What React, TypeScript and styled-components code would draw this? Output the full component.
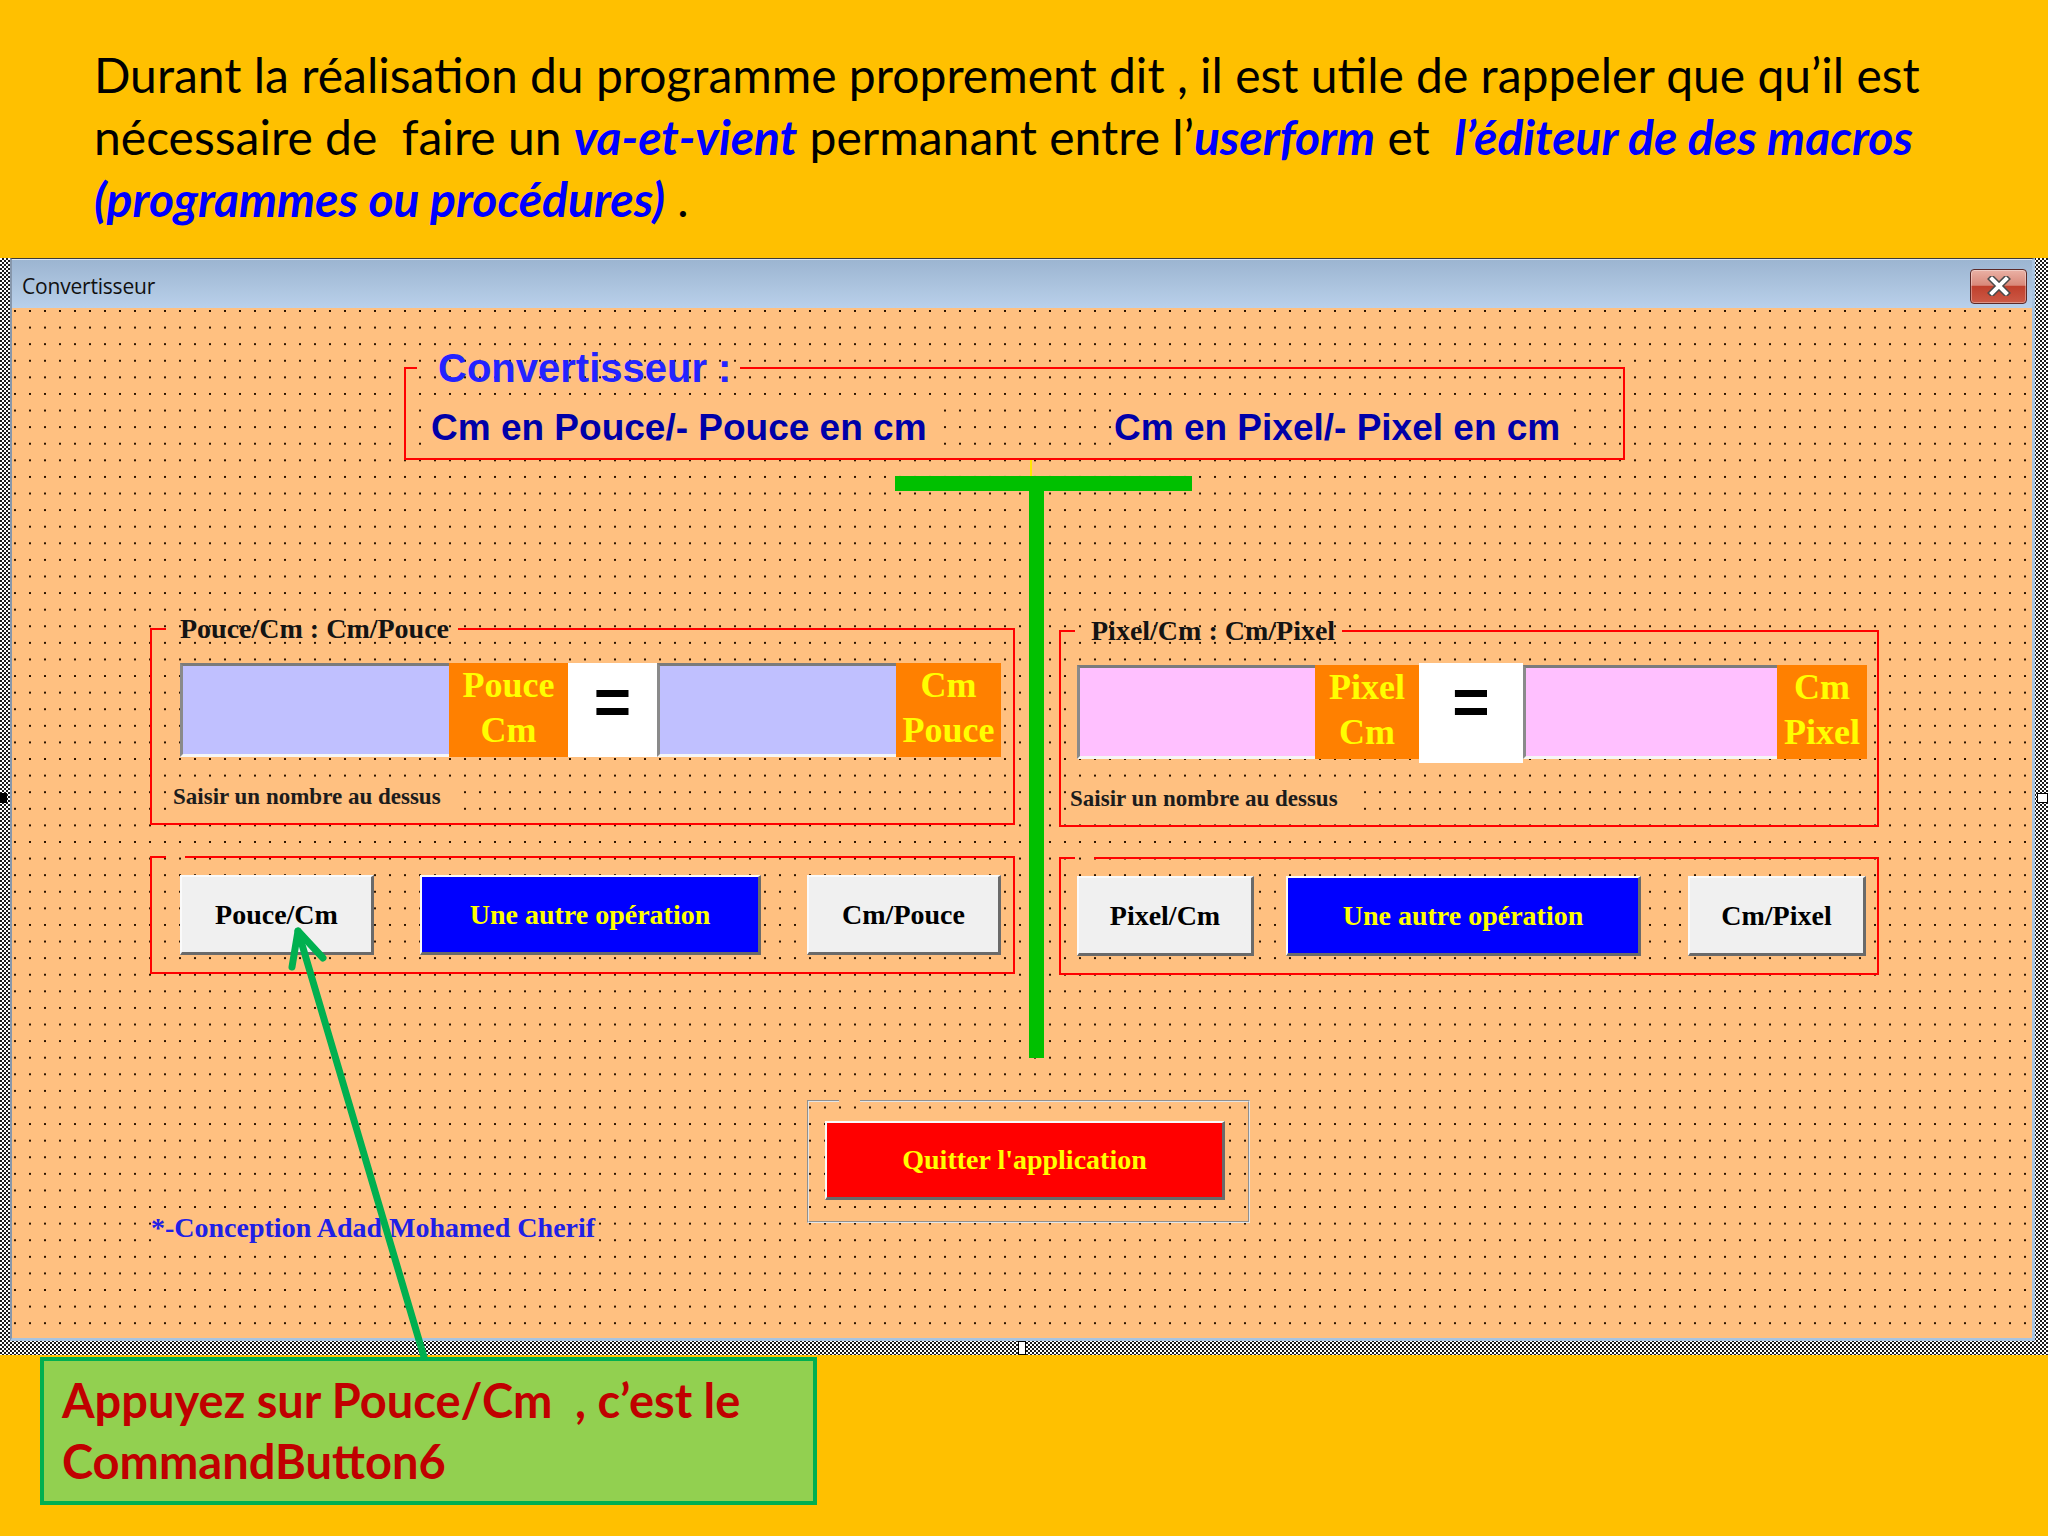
import styled, { createGlobalStyle } from 'styled-components'

const GlobalStyle = createGlobalStyle`
  html, body {
    margin: 0;
    padding: 0;
    background: #ffc000;
  }
`

const Slide = styled.div`
  position: relative;
  width: 2048px;
  height: 1536px;
  overflow: hidden;
  background: #ffc000;
  display: flex;
  flex-direction: column;
`

const Intro = styled.p`
  box-sizing: border-box;
  height: 258px;
  margin: 0;
  padding: 44px 0 0 94px;
  font-family: Lato, 'Open Sans', sans-serif;
  font-size: 48px;
  line-height: 62px;
  color: #000;
  white-space: pre-wrap;
`

const Hl = styled.em`
  color: #0000ff;
  font-weight: 700;
  font-style: italic;
`

const Selection = styled.div`
  position: relative;
  box-sizing: border-box;
  height: 1097px;
  padding: 0 13px 14px 10px;
  background: repeating-conic-gradient(#1a1a1a 0 25%, #fff 0 50%) 0 0 / 4px 4px;
`

const Handle = styled.span<{ $side: 'left' | 'right' | 'bottom' }>`
  position: absolute;
  box-sizing: border-box;
  background: ${({ $side }) => ($side === 'left' ? '#000' : '#fff')};
  border: 1px solid #000;
  ${({ $side }) =>
    $side === 'left'
      ? 'left: 0; top: 535px; width: 7px; height: 10px;'
      : $side === 'right'
        ? 'right: 0; top: 535px; width: 11px; height: 10px;'
        : 'left: 1018px; bottom: 0; width: 8px; height: 14px;'}
`

const Window = styled.div`
  box-sizing: border-box;
  height: 100%;
  display: flex;
  flex-direction: column;
  border-top: 1px solid #3a3a3a;
  border-left: 2px solid #8797ab;
  border-right: 3px solid #a9c4e0;
  border-bottom: 3px solid #a9c4e0;
`

const TitleBar = styled.div`
  height: 49px;
  flex: none;
  display: flex;
  align-items: center;
  justify-content: space-between;
  padding: 4px 5px 0 10px;
  box-sizing: border-box;
  background: linear-gradient(#9cb5d1, #b9d0ea);
  border-top: 1px solid #dbe6f2;
`

const Title = styled.span`
  font-family: 'Open Sans', 'Noto Sans', sans-serif;
  font-size: 21px;
  color: #111;
  letter-spacing: -0.2px;
`

const CloseButton = styled.button`
  width: 57px;
  height: 35px;
  padding: 0;
  display: grid;
  place-items: center;
  border: 1px solid #5c2a28;
  border-radius: 4px;
  background: linear-gradient(#eab1a5 0%, #d9897a 46%, #c0402d 50%, #cc5a46 100%);
  box-shadow: inset 0 0 0 1px rgba(255, 255, 255, 0.35);
`

const Body = styled.div`
  box-sizing: border-box;
  height: 1030px;
  flex: none;
  display: flex;
  flex-direction: column;
  padding-left: 138px;
  background-color: #ffc080;
  background-image: radial-gradient(circle at 1px 1px, #2b1400 1.1px, transparent 1.4px);
  background-size: 15px 16.6px;
  background-position: 2px 2px;
  font-family: 'Liberation Serif', 'Times New Roman', serif;
  font-weight: 700;
`

const RedFrame = styled.fieldset<{ $w: number; $mt: number; $ml?: number }>`
  box-sizing: border-box;
  width: ${({ $w }) => $w}px;
  margin: ${({ $mt }) => $mt}px 0 0 ${({ $ml }) => $ml ?? 0}px;
  padding: 0;
  min-width: 0;
  border: 2px solid #ff0000;
`

const EtchedFrame = styled.fieldset`
  box-sizing: border-box;
  width: 443px;
  margin: 42px 0 0 0;
  padding: 19px 0 21px 16px;
  min-width: 0;
  border: 2px groove #e4e4e4;
`

const Caption = styled.legend<{ $ml: number; $pl: number; $pr: number }>`
  margin-left: ${({ $ml }) => $ml}px;
  padding: 0 ${({ $pr }) => $pr}px 0 ${({ $pl }) => $pl}px;
  font-family: 'Liberation Serif', 'Times New Roman', serif;
  font-size: 28px;
  line-height: 32px;
  font-weight: 700;
  color: #141414;
`

const BigCaption = styled(Caption)`
  font-family: 'Liberation Sans', Arial, sans-serif;
  font-size: 40px;
  line-height: 44px;
  color: #2323ff;
`

const Gap = styled.legend<{ $ml: number; $w: number }>`
  margin-left: ${({ $ml }) => $ml}px;
  width: ${({ $w }) => $w}px;
  height: 2px;
  padding: 0;
`

const HeaderRow = styled.div`
  display: grid;
  grid-template-columns: 683px auto;
  padding: 18px 0 10px 25px;
`

const Subtitle = styled.span`
  justify-self: start;
  font-family: 'Liberation Sans', Arial, sans-serif;
  font-size: 37px;
  line-height: 40px;
  font-weight: 700;
  color: #0000a8;
  background: #ffc080;
  padding-right: 6px;
`

const Crossbar = styled.div`
  position: relative;
  width: 297px;
  height: 15px;
  margin: 16px 0 0 745px;
  background: #00c000;

  &::before {
    content: '';
    position: absolute;
    left: 135px;
    top: -16px;
    width: 2px;
    height: 16px;
    background: #ffe600;
  }
`

const Board = styled.div`
  display: grid;
  grid-template-columns: 865px 44px 820px;
  grid-template-rows: auto auto 83px;
`

const Stem = styled.div`
  grid-column: 2;
  grid-row: 1 / 4;
  width: 15px;
  margin-left: 14px;
  background: #00c000;
`

const Cell = styled.div<{ $col: number; $row: number }>`
  grid-column: ${({ $col }) => $col};
  grid-row: ${({ $row }) => $row};
`

const Inner = styled.div<{ $pl: number }>`
  padding: 18px 0 12px ${({ $pl }) => $pl}px;
`

const FieldRow = styled.div`
  display: flex;
  height: 94px;
`

const TextBox = styled.div<{ $w: number; $bg: string }>`
  box-sizing: border-box;
  width: ${({ $w }) => $w}px;
  height: 100%;
  background: ${({ $bg }) => $bg};
  border-style: solid;
  border-width: 3px 0 3px 3px;
  border-color: #7b7b7b #f6f6f6 #f6f6f6 #8a8a8a;
`

const Unit = styled.div<{ $w: number }>`
  width: ${({ $w }) => $w}px;
  height: 100%;
  background: #ff8000;
  color: #ffff00;
  font-size: 36px;
  line-height: 45px;
  text-align: center;
`

const Equals = styled.div<{ $w: number; $tall?: boolean }>`
  box-sizing: border-box;
  width: ${({ $w }) => $w}px;
  height: ${({ $tall }) => ($tall ? 100 : 94)}px;
  margin-top: ${({ $tall }) => ($tall ? -2 : 0)}px;
  padding-top: 9px;
  background: #fff;
  color: #000;
  font-family: 'Liberation Sans', Arial, sans-serif;
  font-size: 64px;
  line-height: 60px;
  font-weight: 700;
  text-align: center;
`

const Hint = styled.div`
  display: inline-block;
  margin: 26px 0 0 -7px;
  padding-right: 14px;
  font-size: 23px;
  line-height: 28px;
  color: #1c1c1c;
  background: #ffc080;
`

const ButtonRow = styled.div<{ $pl: number }>`
  display: flex;
  padding: 17px 0 17px ${({ $pl }) => $pl}px;
`

const CmdButton = styled.button<{ $w: number; $h?: number; $ml?: number; $bg?: string; $fg?: string }>`
  box-sizing: border-box;
  width: ${({ $w }) => $w}px;
  height: ${({ $h }) => $h ?? 80}px;
  margin-left: ${({ $ml }) => $ml ?? 0}px;
  padding: 0;
  background: ${({ $bg }) => $bg ?? '#f0f0f0'};
  color: ${({ $fg }) => $fg ?? '#000'};
  font-family: 'Liberation Serif', 'Times New Roman', serif;
  font-size: 28px;
  font-weight: 700;
  border-style: solid;
  border-width: 2px 3px 3px 2px;
  border-color: #fafafa #6a6a6a #6a6a6a #fafafa;
`

const Footer = styled.div`
  display: grid;
  grid-template-columns: 657px auto;
  align-items: start;
`

const Credit = styled.div`
  justify-self: start;
  margin: 154px 0 0 1px;
  font-size: 28px;
  line-height: 32px;
  color: #2020e6;
  background: #ffc080;
`

const Callout = styled.div`
  box-sizing: border-box;
  width: 777px;
  height: 148px;
  margin: 2px 0 0 40px;
  padding: 9px 0 0 18px;
  background: #92d050;
  border: 4px solid #00b050;
  font-family: Lato, 'Open Sans', sans-serif;
  font-size: 47px;
  line-height: 61px;
  font-weight: 700;
  color: #c00000;
  white-space: pre-wrap;
`

const Overlay = styled.svg`
  position: absolute;
  left: 0;
  top: 0;
  pointer-events: none;
`

export default function App() {
  return (
    <>
      <GlobalStyle />
      <Slide>
        <Intro>
          {'Durant la réalisation du programme proprement dit , il est utile de rappeler que qu’il est'}
          <br />
          {'nécessaire de  faire un '}
          <Hl>va-et-vient</Hl>
          {' permanant entre l’'}
          <Hl>userform</Hl>
          {' et  '}
          <Hl>l’éditeur de des macros</Hl>
          <br />
          <Hl>(programmes ou procédures)</Hl>
          {' .'}
        </Intro>

        <Selection>
          <Handle $side="left" />
          <Handle $side="right" />
          <Handle $side="bottom" />
          <Window>
            <TitleBar>
              <Title>Convertisseur</Title>
              <CloseButton aria-label="Fermer">
                <svg width="24" height="20" viewBox="0 0 24 20">
                  <path d="M5 3 L19 17 M19 3 L5 17" stroke="#4a4a4a" strokeWidth="7" strokeLinecap="square" />
                  <path d="M5 3 L19 17 M19 3 L5 17" stroke="#fff" strokeWidth="4" strokeLinecap="square" />
                </svg>
              </CloseButton>
            </TitleBar>

            <Body>
              <RedFrame $w={1221} $mt={38} $ml={254}>
                <BigCaption $ml={11} $pl={21} $pr={9}>
                  Convertisseur :
                </BigCaption>
                <HeaderRow>
                  <Subtitle>Cm en Pouce/- Pouce en cm</Subtitle>
                  <Subtitle>Cm en Pixel/- Pixel en cm</Subtitle>
                </HeaderRow>
              </RedFrame>

              <Crossbar />

              <Board>
                <Stem />
                <Cell $col={1} $row={1}>
                  <RedFrame $w={865} $mt={122}>
                    <Caption $ml={14} $pl={14} $pr={9}>
                      Pouce/Cm : Cm/Pouce
                    </Caption>
                    <Inner $pl={28}>
                      <FieldRow>
                        <TextBox $w={269} $bg="#c0c0ff" />
                        <Unit $w={119}>
                          Pouce
                          <br />
                          Cm
                        </Unit>
                        <Equals $w={89}>=</Equals>
                        <TextBox $w={239} $bg="#c0c0ff" />
                        <Unit $w={105}>
                          Cm
                          <br />
                          Pouce
                        </Unit>
                      </FieldRow>
                      <Hint>Saisir un nombre au dessus</Hint>
                    </Inner>
                  </RedFrame>
                </Cell>
                <Cell $col={3} $row={1}>
                  <RedFrame $w={820} $mt={124}>
                    <Caption $ml={14} $pl={16} $pr={7}>
                      Pixel/Cm : Cm/Pixel
                    </Caption>
                    <Inner $pl={16}>
                      <FieldRow>
                        <TextBox $w={238} $bg="#ffc0ff" />
                        <Unit $w={104}>
                          Pixel
                          <br />
                          Cm
                        </Unit>
                        <Equals $w={104} $tall>
                          =
                        </Equals>
                        <TextBox $w={254} $bg="#ffc0ff" />
                        <Unit $w={90}>
                          Cm
                          <br />
                          Pixel
                        </Unit>
                      </FieldRow>
                      <Hint>Saisir un nombre au dessus</Hint>
                    </Inner>
                  </RedFrame>
                </Cell>

                <Cell $col={1} $row={2}>
                  <RedFrame $w={865} $mt={29}>
                    <Gap $ml={14} $w={19} />
                    <ButtonRow $pl={28}>
                      <CmdButton $w={194}>Pouce/Cm</CmdButton>
                      <CmdButton $w={341} $ml={46} $bg="#0000ff" $fg="#ffff00">
                        Une autre opération
                      </CmdButton>
                      <CmdButton $w={194} $ml={46}>
                        Cm/Pouce
                      </CmdButton>
                    </ButtonRow>
                  </RedFrame>
                </Cell>
                <Cell $col={3} $row={2}>
                  <RedFrame $w={820} $mt={30}>
                    <Gap $ml={14} $w={19} />
                    <ButtonRow $pl={16}>
                      <CmdButton $w={177}>Pixel/Cm</CmdButton>
                      <CmdButton $w={355} $ml={32} $bg="#0000ff" $fg="#ffff00">
                        Une autre opération
                      </CmdButton>
                      <CmdButton $w={178} $ml={47}>
                        Cm/Pixel
                      </CmdButton>
                    </ButtonRow>
                  </RedFrame>
                </Cell>
              </Board>

              <Footer>
                <Credit>*-Conception Adad Mohamed Cherif</Credit>
                <EtchedFrame>
                  <Gap $ml={14} $w={21} />
                  <CmdButton $w={400} $h={79} $bg="#ff0000" $fg="#ffff00">
                    Quitter l'application
                  </CmdButton>
                </EtchedFrame>
              </Footer>
            </Body>
          </Window>
        </Selection>

        <Callout>
          {'Appuyez sur Pouce/Cm  , c’est le'}
          <br />
          {'CommandButton6'}
        </Callout>

        <Overlay width="2048" height="1536" viewBox="0 0 2048 1536">
          <g stroke="#00b050" strokeWidth="7" strokeLinecap="round" strokeLinejoin="round" fill="none">
            <path d="M424 1357 L298 931" />
            <path d="M292 967 L298 931 L323 958" />
          </g>
        </Overlay>
      </Slide>
    </>
  )
}
